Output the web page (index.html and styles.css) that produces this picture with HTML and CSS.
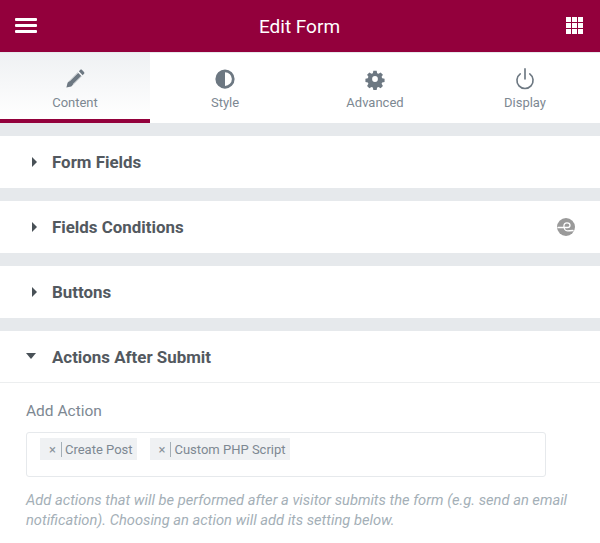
FILE: index.html
```html
<!DOCTYPE html>
<html lang="en">

<head>
    <link rel="stylesheet" href="styles.css">
    <title>Edit Form</title>
</head>

<body>
    <div class="header">
        <div class="menu-icon"><span></span><span></span><span></span></div>
        <h1>Edit Form</h1>
        <div class="grid-icon">
            <span></span><span></span><span></span>
            <span></span><span></span><span></span>
            <span></span><span></span><span></span>
        </div>
    </div>

    <div class="tabs">
        <div class="tab active">
            <svg viewBox="0 0 24 24" width="22" height="22">
                <path fill="#6d7882" d="M2.600 21.400l1.300-5.300L15 4.800l4.200 4.200L7.900 20.200zM16.200 3.600l1.400-1.400c.6-.6 1.500-.6 2.100 0l2.100 2.100c.6.6.6 1.500 0 2.100l-1.400 1.400z" />
                <path fill="none" stroke="#fff" stroke-width=".7" d="M6 14.400l9.800-9.600M9.600 18l9.800-9.600" />
            </svg>
            <p>Content</p>
        </div>
        <div class="tab">
            <svg viewBox="0 0 24 24" width="22" height="22">
                <circle cx="12" cy="12" r="9" fill="none" stroke="#6d7882" stroke-width="3" />
                <path fill="#6d7882" d="M12 3a9 9 0 0 0 0 18z" />
            </svg>
            <p>Style</p>
        </div>
        <div class="tab">
            <svg viewBox="0 0 24 24" width="22" height="22">
                <path fill="#6d7882" fill-rule="evenodd" d="M10 2h4l.6 2.900 1.700.7 2.500-1.600 2.800 2.800-1.600 2.500.7 1.700 2.900.6v4l-2.900.6-.7 1.700 1.600 2.500-2.800 2.800-2.500-1.600-1.700.7-.6 2.900h-4l-.6-2.900-1.700-.7-2.500 1.600-2.800-2.800 1.600-2.500-.7-1.700-2.900-.6v-4l2.900-.6.7-1.700-1.600-2.500 2.800-2.800 2.500 1.600 1.700-.7zM12 8.500a3.500 3.500 0 1 0 0 7 3.500 3.500 0 0 0 0-7z" transform="translate(1.200 1.200) scale(.9)" />
            </svg>
            <p>Advanced</p>
        </div>
        <div class="tab">
            <svg viewBox="0 0 24 24" width="24" height="24">
                <path fill="none" stroke="#6d7882" stroke-width="1.800" stroke-linecap="round" d="M12 1v11M6.800 6.500a8.800 8.800 0 1 0 10.400 0" />
            </svg>
            <p>Display</p>
        </div>
    </div>

    <div class="section">
        <span class="arrow"></span>
        <h2>Form Fields</h2>
    </div>

    <div class="section">
        <span class="arrow"></span>
        <h2>Fields Conditions</h2>
        <svg class="badge" viewBox="0 0 18 18" width="18" height="18">
            <circle cx="9" cy="9" r="9" fill="#9a9a9a" />
            <path fill="none" stroke="#fff" stroke-width="1.300" stroke-linecap="round" d="M1 9.500h9.500c1.600 0 2.500-.9 2.500-2.200S11.800 4.800 10 4.800 6.900 6.100 6.900 8.200 8.200 12.800 10.500 12.800c1.500 0 3-.1 5.500-.3" />
        </svg>
    </div>

    <div class="section">
        <span class="arrow"></span>
        <h2>Buttons</h2>
    </div>

    <div class="section open">
        <span class="arrow-down"></span>
        <h2>Actions After Submit</h2>
    </div>

    <div class="content">
        <label>Add Action</label>
        <div class="select">
            <div class="tag"><span class="remove">×</span><span class="tag-text">Create Post</span></div>
            <div class="tag"><span class="remove">×</span><span class="tag-text">Custom PHP Script</span></div>
        </div>
        <p class="help">Add actions that will be performed after a visitor submits the form (e.g. send an email notification). Choosing an action will add its setting below.</p>
    </div>
</body>

</html>
```

FILE: styles.css
```css
* {
    margin: 0;
    padding: 0;
    box-sizing: border-box;
    font-family: Roboto, "Liberation Sans", sans-serif;
}

body {
    background-color: #e6e9ec;
    height: 543px;
    overflow: hidden;
}

.header {
    height: 52px;
    background-color: #93003c;
    display: flex;
    align-items: center;
    justify-content: space-between;
    padding: 0 17px 0 15px;
}

.header h1 {
    color: #fff;
    font-size: 19px;
    font-weight: 400;
    margin-left: -4px;
}

.menu-icon {
    width: 22px;
    display: flex;
    flex-direction: column;
    gap: 3px;
    margin-top: -1px;
}

.menu-icon span {
    height: 3px;
    background-color: #fff;
    border-radius: 1px;
}

.grid-icon {
    width: 17px;
    display: grid;
    grid-template-columns: repeat(3, 5px);
    gap: 1px;
    margin-top: -1px;
}

.grid-icon span {
    height: 5px;
    background-color: #fff;
}

.tabs {
    height: 70px;
    margin-top: 1px;
    background-color: #fff;
    display: flex;
    margin-bottom: 13px;
}

.tab {
    width: 150px;
    display: flex;
    flex-direction: column;
    align-items: center;
    padding-top: 15px;
    color: #7d8892;
}

.tab svg {
    height: 22px;
}

.tab p {
    font-size: 13px;
    margin-top: 5px;
}

.tab.active {
    background: linear-gradient(180deg, #eff1f3, #fff);
    border-bottom: 4px solid #93003c;
}

.section {
    height: 52px;
    background-color: #fff;
    display: flex;
    align-items: center;
    padding-left: 32px;
    margin-bottom: 13px;
}

.section h2 {
    font-size: 16.900px;
    font-weight: 700;
    color: #53595f;
    margin-left: 15px;
}

.arrow {
    width: 0;
    height: 0;
    border-top: 5px solid transparent;
    border-bottom: 5px solid transparent;
    border-left: 5px solid #495157;
}

.arrow-down {
    width: 0;
    height: 0;
    margin-left: -6px;
    margin-right: 1px;
    margin-top: -1px;
    border-left: 5.500px solid transparent;
    border-right: 5.500px solid transparent;
    border-top: 6px solid #495157;
}

.badge {
    margin-left: auto;
    margin-right: 25px;
}

.section.open {
    margin-bottom: 0;
    border-bottom: 1px solid #eceeef;
}

.content {
    background-color: #fff;
    height: 161px;
    padding: 19px 26px 0;
}

.content label {
    display: block;
    font-size: 15.500px;
    line-height: 18px;
    color: #7d8892;
}

.select {
    width: 520px;
    height: 45px;
    margin-top: 12px;
    border: 1px solid #e6e9ec;
    border-radius: 3px;
    display: flex;
    align-items: flex-start;
    gap: 13px;
    padding: 5px 13px;
}

.tag {
    height: 22px;
    background-color: #eff1f3;
    display: flex;
    align-items: center;
    padding: 0 4px 0 9px;
    font-size: 13px;
    color: #7d8892;
}

.remove {
    font-size: 13px;
    color: #8a949c;
    padding-right: 5px;
    height: 15px;
    line-height: 15px;
    border-right: 1px solid #a4afb7;
    margin-right: 3px;
}

.help {
    margin-top: 13px;
    font-size: 14.700px;
    line-height: 20px;
    font-style: italic;
    color: #a4afb7;
}
```
